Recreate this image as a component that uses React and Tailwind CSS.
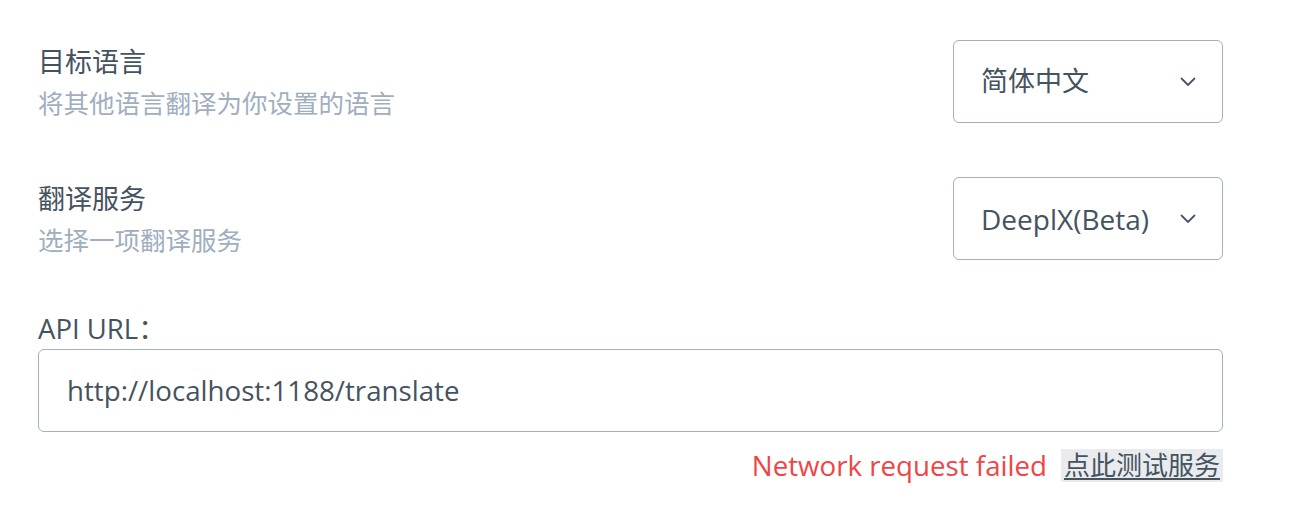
import React from "react";

const font = { fontFamily: '"Open Sans", "Noto Sans CJK SC", sans-serif' };

function Chevron() {
  return (
    <svg width="16" height="10" viewBox="0 0 16 10" fill="none" className="shrink-0">
      <path d="M1.5 1.5 L8 8 L14.5 1.5" stroke="#4a5568" strokeWidth="1.8" strokeLinecap="round" strokeLinejoin="round" />
    </svg>
  );
}

function Row({ title, desc, value, valueClass }) {
  return (
    <div className="flex items-center justify-between">
      <div className="flex flex-col">
        <div className="text-[27px] leading-[42px] text-[#45535f]">{title}</div>
        <div className="text-[25.5px] leading-[40px] text-[#a0aec0]">{desc}</div>
      </div>
      <div className="flex h-[83px] w-[270px] items-center justify-between rounded-[6px] border border-[#a3b1bf] bg-white pl-[27px] pr-[26px]">
        <span className={valueClass + " text-[#45535f]"}>{value}</span>
        <Chevron />
      </div>
    </div>
  );
}

export default function App() {
  return (
    <div className="h-[508px] w-[1301px] bg-white" style={font}>
      <div className="w-[1185px] pl-[38px] pt-[40px] box-content">
        <Row title="目标语言" desc="将其他语言翻译为你设置的语言" value="简体中文" valueClass="text-[27px]" />
        <div className="mt-[54px]">
          <Row title="翻译服务" desc="选择一项翻译服务" value="DeeplX(Beta)" valueClass="text-[28px]" />
        </div>
        <div className="mt-[49px] text-[27.5px] leading-[40px] text-[#45535f]">API URL：</div>
        <div className="flex h-[83px] items-center rounded-[6px] border border-[#a3b1bf] pl-[28px] text-[27.7px] text-[#45535f]">
          http://localhost:1188/translate
        </div>
        <div className="mt-[17px] flex items-center justify-end gap-[14px]">
          <span className="text-[27.7px] leading-[33px] text-[#f04545]">Network request failed</span>
          <span className="bg-[#e9ebee] px-[3px] text-[26px] leading-[33px] text-[#45535f] underline underline-offset-[3px]">点此测试服务</span>
        </div>
      </div>
    </div>
  );
}
